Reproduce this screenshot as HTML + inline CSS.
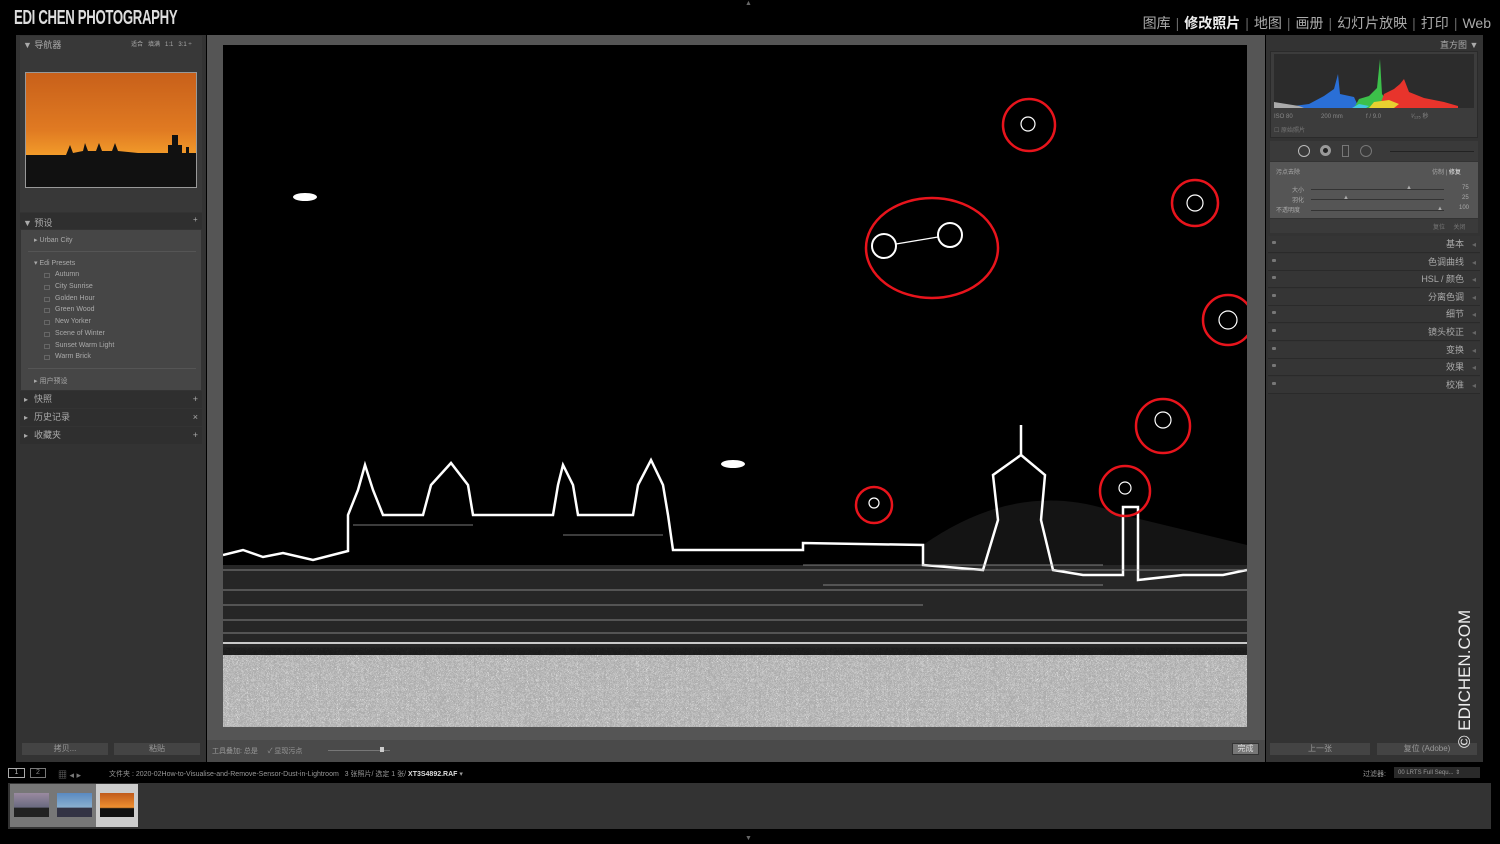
<!DOCTYPE html>
<html><head><meta charset="utf-8"><style>
*{margin:0;padding:0;box-sizing:border-box}
body{width:1500px;height:844px;background:#000;position:relative;overflow:hidden;font-family:"Liberation Sans","Noto Sans CJK SC",sans-serif;color:#bbb}
.a{position:absolute}
.t{font-size:8px;color:#aaa;white-space:nowrap}
.hdr{position:absolute;left:20px;width:182px;height:17px;background:#2f2f2f;font-size:9px;color:#aaa;padding-left:14px;line-height:17px}
.hdr:before{content:"▸";position:absolute;left:4px;font-size:8px}
.rh{position:absolute;left:1268px;width:212px;height:17px;border-bottom:1px solid #2a2a2a;background:#353535;font-size:9px;color:#aaa;text-align:right;padding-right:16px;line-height:17px}
.rh:after{content:"◂";position:absolute;right:4px;color:#666;font-size:8px}
.rh:before{content:"";position:absolute;left:4px;top:5px;width:4px;height:3px;background:#777;border-radius:1px}
.p{font-size:7px;color:#aaa;position:absolute;left:55px}
.cb{position:absolute;left:44px;width:6px;height:5px;border:1px solid #666}
.btn{position:absolute;height:14px;background:#444;border:1px solid #333;color:#999;font-size:8px;text-align:center;line-height:12px}
.m span{color:#666;margin:0 5px}
</style></head><body>
<div class="a" style="left:14px;top:7px;font-size:20px;font-weight:bold;color:#ddd;letter-spacing:-0.5px;transform:scaleX(0.66);transform-origin:left;white-space:nowrap">EDI CHEN PHOTOGRAPHY</div>
<div class="a m" style="right:9px;top:13px;font-size:14px;color:#aaa;white-space:nowrap">图库<span>|</span><b style="color:#eee">修改照片</b><span>|</span>地图<span>|</span>画册<span>|</span>幻灯片放映<span>|</span>打印<span>|</span>Web</div>

<!-- left panel -->
<div class="a" style="left:16px;top:35px;width:190px;height:727px;background:#333"></div>
<div class="a" style="left:20px;top:36px;width:182px;height:176px;background:#383838"></div>
<div class="a t" style="left:23px;top:38px;font-size:9px">▼ 导航器</div>
<div class="a t" style="left:131px;top:39px;font-size:6px">适合 &nbsp; 填满 &nbsp; 1:1 &nbsp; 3:1 ÷</div>
<div class="a" style="left:25px;top:72px;width:172px;height:116px;border:1px solid #999;background:linear-gradient(#c8601a,#e07a22 50%,#f29b2a 72%,#f6c040 76%,#111 77%);overflow:hidden">
<svg width="172" height="116" class="a" style="left:0;top:0"><path d="M0 116V82h40l4-10 3 8 10-2 2-8 3 8 8 0 3-8 3 8 10 0 3-8 3 8 20 2h30v-8h4v-10h6v10h4v8h4v-6h3v6h26v34z" fill="#111"/></svg></div>
<div class="a" style="left:20px;top:213px;width:182px;height:16px;background:#2f2f2f"></div>
<div class="a t" style="left:23px;top:216px;font-size:9px">▼ 预设</div><div class="a t" style="left:193px;top:215px">+</div>
<div class="a" style="left:21px;top:230px;width:180px;height:160px;background:#464646"></div>
<div class="a t" style="left:34px;top:236px;font-size:7px">▸ Urban City</div>
<div class="a" style="left:28px;top:251px;width:168px;height:1px;background:#555"></div>
<div class="a t" style="left:34px;top:259px;font-size:7px">▾ Edi Presets</div>
<div class="cb" style="top:273px"></div><div class="p" style="top:271px">Autumn</div>
<div class="cb" style="top:285px"></div><div class="p" style="top:283px">City Sunrise</div>
<div class="cb" style="top:297px"></div><div class="p" style="top:295px">Golden Hour</div>
<div class="cb" style="top:308px"></div><div class="p" style="top:306px">Green Wood</div>
<div class="cb" style="top:320px"></div><div class="p" style="top:318px">New Yorker</div>
<div class="cb" style="top:332px"></div><div class="p" style="top:330px">Scene of Winter</div>
<div class="cb" style="top:344px"></div><div class="p" style="top:342px">Sunset Warm Light</div>
<div class="cb" style="top:355px"></div><div class="p" style="top:353px">Warm Brick</div>
<div class="a" style="left:28px;top:368px;width:168px;height:1px;background:#555"></div>
<div class="a t" style="left:34px;top:376px;font-size:7px">▸ 用户预设</div>
<div class="hdr" style="top:391px">快照<span style="position:absolute;right:4px">+</span></div>
<div class="hdr" style="top:409px">历史记录<span style="position:absolute;right:4px">×</span></div>
<div class="hdr" style="top:427px">收藏夹<span style="position:absolute;right:4px">+</span></div>
<div class="btn" style="left:21px;top:742px;width:88px">拷贝...</div>
<div class="btn" style="left:113px;top:742px;width:88px">粘贴</div>

<!-- center -->
<div class="a" style="left:207px;top:35px;width:1058px;height:705px;background:#555"></div>
<div class="a" style="left:207px;top:740px;width:1058px;height:22px;background:#4a4a4a"></div>
<div class="a t" style="left:212px;top:746px;font-size:7px;color:#999">工具叠加: 总是 &nbsp;&nbsp;&nbsp; ✓ 显现污点</div>
<div class="a" style="left:328px;top:750px;width:62px;height:1px;background:#777"></div>
<div class="a" style="left:380px;top:747px;width:4px;height:5px;background:#ccc"></div>
<div class="btn" style="left:1232px;top:743px;width:27px;height:12px;line-height:10px;font-size:8px;background:#777;color:#ddd">完成</div>
<div class="a" style="left:223px;top:45px;width:1024px;height:682px;background:#000;overflow:hidden">
<svg width="1024" height="682" class="a" style="left:0;top:0">
<defs><filter id="n"><feTurbulence baseFrequency="0.9" numOctaves="2"/><feColorMatrix values="0 0 0 0 0 0 0 0 0 0 0 0 0 0 0 0 0 0 -2 1.3"/></filter></defs>
<path d="M700 500 Q800 430 900 470 L1024 500 V560 H700z" fill="#141414"/>
<rect x="0" y="520" width="1024" height="90" fill="#262626"/>
<g fill="none" stroke="#fff" stroke-width="2.5">
<path d="M0 510 L20 505 L40 512 L60 508 L90 515 L125 506 L125 470 L135 445 L142 420 L150 445 L160 470 L200 470 L208 440 L228 418 L245 440 L250 470 L330 470 L335 440 L340 420 L350 440 L355 470 L410 470 L415 440 L428 415 L440 440 L445 470 L450 505 L580 505 L580 498 L700 500 L700 520 L760 525 L775 475 L770 430 L798 410 L822 430 L818 475 L830 525 L860 530 L900 530 L900 462 L915 462 L915 535 L960 530 L1000 530 L1024 525"/>
<path d="M798 410 V380"/>
<path d="M0 598 H1024" stroke-width="1.5"/>
</g>
<g fill="none" stroke="#aaa" stroke-width="1" opacity=".7">
<path d="M0 525 H1024 M0 545 H1024 M0 560 H700 M0 575 H1024 M0 588 H1024"/>
<path d="M130 480 H250 M340 490 H440 M580 520 H880 M600 540 H880"/>
</g>
<rect x="0" y="610" width="1024" height="72" fill="#e6e6e6"/>
<rect x="0" y="610" width="1024" height="72" filter="url(#n)" opacity=".25"/>
<ellipse cx="82" cy="152" rx="12" ry="4" fill="#fff"/>
<ellipse cx="510" cy="419" rx="12" ry="4" fill="#fff"/>
<g fill="none" stroke="#e8141c" stroke-width="2.5">
<circle cx="806" cy="80" r="26"/><circle cx="972" cy="158" r="23"/><circle cx="1005" cy="275" r="25"/><circle cx="940" cy="381" r="27"/><circle cx="902" cy="446" r="25"/><circle cx="651" cy="460" r="18"/>
<ellipse cx="709" cy="203" rx="66" ry="50"/>
</g>
<g fill="none" stroke="#fff" stroke-width="1.2">
<circle cx="805" cy="79" r="7"/><circle cx="972" cy="158" r="8"/><circle cx="1005" cy="275" r="9"/><circle cx="940" cy="375" r="8"/><circle cx="902" cy="443" r="6"/><circle cx="651" cy="458" r="5"/>
<circle cx="661" cy="201" r="12" stroke-width="2"/><circle cx="727" cy="190" r="12" stroke-width="2"/><path d="M673 199 L715 192"/>
</g>
</svg></div>

<!-- right -->
<div class="a" style="left:1266px;top:35px;width:217px;height:727px;background:#333"></div>
<div class="a t" style="left:1440px;top:38px;font-size:9px">直方图 ▼</div>
<div class="a" style="left:1270px;top:51px;width:208px;height:87px;background:#3c3c3c;border:1px solid #2a2a2a"></div>
<svg class="a" style="left:1274px;top:54px" width="200" height="54">
<rect width="200" height="54" fill="#2c2c2c"/>
<path d="M0 54 L0 50 L20 52 L35 50 L50 42 L60 35 L64 20 L66 40 L80 43 L85 54z" fill="#2a6fd6"/>
<path d="M80 54 L85 45 L95 42 L103 34 L106 5 L108 40 L115 50 L120 54z" fill="#3cc04a"/>
<path d="M105 54 L110 40 L120 35 L126 30 L130 25 L135 38 L150 44 L170 48 L184 52 L184 54z" fill="#e8342c"/>
<path d="M95 54 L100 48 L115 46 L125 50 L120 54z" fill="#e8d030"/>
<path d="M78 54 L85 50 L95 52 L92 54z" fill="#40c8e0"/>
<path d="M0 48 L25 52 L30 54 L0 54z" fill="#aaa"/>
</svg>
<div class="a t" style="left:1274px;top:111px;font-size:6px;color:#888">ISO 80 &nbsp;&nbsp;&nbsp;&nbsp;&nbsp;&nbsp;&nbsp;&nbsp;&nbsp;&nbsp;&nbsp;&nbsp;&nbsp;&nbsp;&nbsp; 200 mm &nbsp;&nbsp;&nbsp;&nbsp;&nbsp;&nbsp;&nbsp;&nbsp;&nbsp;&nbsp;&nbsp;&nbsp; f / 9.0 &nbsp;&nbsp;&nbsp;&nbsp;&nbsp;&nbsp;&nbsp;&nbsp;&nbsp;&nbsp;&nbsp;&nbsp;&nbsp;&nbsp;&nbsp;&nbsp; ¹⁄₁₂₅ 秒</div>
<div class="a t" style="left:1274px;top:125px;font-size:6px;color:#777">☐ 原始照片</div>
<div class="a" style="left:1270px;top:141px;width:208px;height:20px;background:#3a3a3a"></div>
<div class="a" style="left:1298px;top:145px;width:12px;height:12px;border:1.5px solid #bbb;border-radius:50%"></div>
<div class="a" style="left:1320px;top:145px;width:11px;height:11px;border:3px solid #999;border-radius:50%;background:#222"></div>
<div class="a" style="left:1342px;top:145px;width:7px;height:12px;border:1px solid #777"></div>
<div class="a" style="left:1360px;top:145px;width:12px;height:12px;border:1px solid #777;border-radius:50%"></div>
<div class="a" style="left:1390px;top:151px;width:84px;height:1px;background:#222"></div>
<div class="a" style="left:1270px;top:162px;width:208px;height:56px;background:#555"></div>
<div class="a t" style="left:1276px;top:167px;font-size:6px">污点去除</div>
<div class="a t" style="left:1432px;top:167px;font-size:6px">仿制 | <span style="color:#eee">修复</span></div>
<div class="a t" style="left:1292px;top:185px;font-size:6px">大小</div><div class="a t" style="left:1292px;top:195px;font-size:6px">羽化</div><div class="a t" style="left:1276px;top:205px;font-size:6px">不透明度</div>
<div class="a" style="left:1311px;top:189px;width:133px;height:1px;background:#333"></div>
<div class="a" style="left:1311px;top:199px;width:133px;height:1px;background:#333"></div>
<div class="a" style="left:1311px;top:210px;width:133px;height:1px;background:#333"></div>
<div class="a t" style="left:1406px;top:185px;font-size:6px">▲</div><div class="a t" style="left:1343px;top:195px;font-size:6px">▲</div><div class="a t" style="left:1437px;top:206px;font-size:6px">▲</div>
<div class="a t" style="left:1462px;top:185px;font-size:6px">75</div><div class="a t" style="left:1462px;top:195px;font-size:6px">25</div><div class="a t" style="left:1459px;top:205px;font-size:6px">100</div>
<div class="a" style="left:1270px;top:219px;width:208px;height:14px;background:#3a3a3a"></div>
<div class="a t" style="left:1433px;top:222px;font-size:6px;color:#777">复位 &nbsp;&nbsp;&nbsp; 关闭</div>
<div class="rh" style="top:236px">基本</div>
<div class="rh" style="top:254px">色调曲线</div>
<div class="rh" style="top:271px">HSL / 颜色</div>
<div class="rh" style="top:289px">分离色调</div>
<div class="rh" style="top:306px">细节</div>
<div class="rh" style="top:324px">镜头校正</div>
<div class="rh" style="top:342px">变换</div>
<div class="rh" style="top:359px">效果</div>
<div class="rh" style="top:377px">校准</div>
<div class="btn" style="left:1269px;top:742px;width:102px">上一张</div>
<div class="btn" style="left:1376px;top:742px;width:102px">复位 (Adobe)</div>
<div class="a" style="left:1455px;top:748px;font-size:17px;color:#eee;transform:rotate(-90deg);transform-origin:left top;white-space:nowrap">© EDICHEN.COM</div>

<!-- filmstrip -->
<div class="a" style="left:8px;top:768px;width:17px;height:10px;border:1px solid #aaa;font-size:7px;text-align:center;line-height:8px">1</div>
<div class="a" style="left:30px;top:768px;width:16px;height:10px;border:1px solid #777;font-size:7px;text-align:center;line-height:8px;color:#888">2</div>
<div class="a t" style="left:58px;top:768px;font-size:9px;color:#777">▦ ◂ ▸</div>
<div class="a t" style="left:109px;top:769px;font-size:7px;color:#999">文件夹 : 2020-02How-to-Visualise-and-Remove-Sensor-Dust-in-Lightroom &nbsp; 3 张照片/ 选定 1 张/ <b style="color:#ddd">XT3S4892.RAF</b> ▾</div>
<div class="a t" style="left:1363px;top:769px;font-size:7px;color:#999">过滤器:</div>
<div class="a t" style="left:1394px;top:767px;width:86px;height:11px;background:#2a2a2a;font-size:6px;color:#999;padding:2px 4px">00 LRTS Full Sequ... ⇕</div>
<div class="a" style="left:8px;top:783px;width:1483px;height:46px;background:#333"></div>
<div class="a" style="left:10px;top:784px;width:43px;height:43px;background:#777"></div>
<div class="a" style="left:53px;top:784px;width:43px;height:43px;background:#777"></div>
<div class="a" style="left:96px;top:784px;width:42px;height:43px;background:#ccc"></div>
<div class="a" style="left:14px;top:793px;width:35px;height:24px;background:linear-gradient(#9a8aa0,#6a6a80 60%,#222 62%)"></div>
<div class="a" style="left:57px;top:793px;width:35px;height:24px;background:linear-gradient(#5a8ac0,#8ab0d0 60%,#334 62%)"></div>
<div class="a" style="left:100px;top:793px;width:34px;height:24px;background:linear-gradient(#c05a1a,#f09030 60%,#111 65%)"></div>
<div class="a" style="left:745px;top:0;font-size:7px;color:#666">▲</div>
<div class="a" style="left:745px;top:835px;font-size:7px;color:#666">▼</div>
</body></html>
